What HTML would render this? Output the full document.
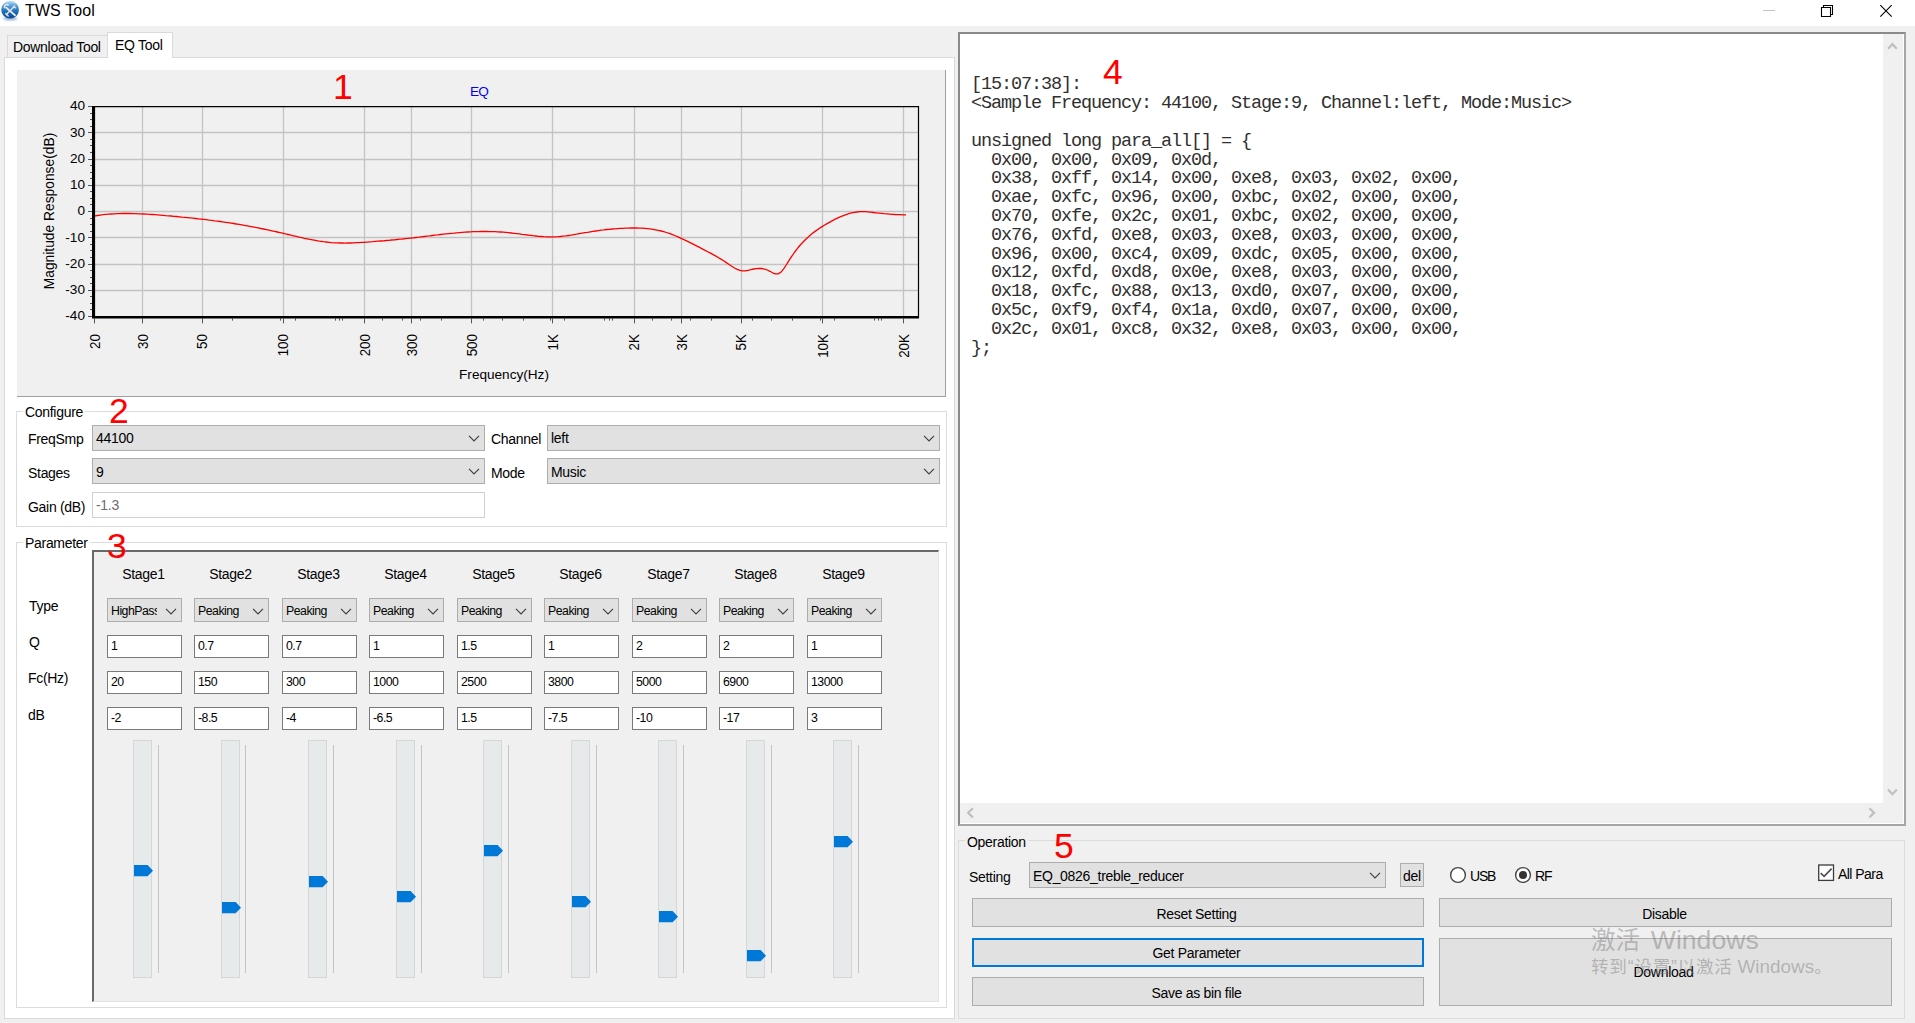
<!DOCTYPE html><html><head><meta charset="utf-8"><title>TWS Tool</title><style>
*{box-sizing:border-box}
html,body{margin:0;padding:0}
body{width:1915px;height:1023px;overflow:hidden;background:#f0f0f0;font-family:"Liberation Sans", "Noto Sans CJK SC", sans-serif;font-size:14px;letter-spacing:-0.3px;color:#000;position:relative}
.abs{position:absolute}
.lbl{position:absolute;white-space:nowrap;line-height:16px;height:16px}
.combo{position:absolute;background:#e1e1e1;border:1px solid #adadad;white-space:nowrap;overflow:hidden}
.combo span{position:absolute;left:3px;top:50%;transform:translateY(-50%);line-height:16px}
.combo svg{position:absolute;right:4px;top:50%;margin-top:-3px}
.edit{position:absolute;background:#fff;border:1px solid #7a7a7a;white-space:nowrap;overflow:hidden}
.edit span{position:absolute;left:3px;top:50%;transform:translateY(-50%);line-height:16px}
.btn{position:absolute;background:#e1e1e1;border:1px solid #adadad;text-align:center;white-space:nowrap}
.btn span{position:absolute;left:0;right:0;top:50%;transform:translateY(-50%);line-height:16px}
.grp{position:absolute;border:1px solid #dcdcdc}
.grp>.cap{position:absolute;top:-8px;left:6px;padding:0 2px;line-height:16px;white-space:nowrap}
.red{position:absolute;letter-spacing:0;color:#fe0000;font-size:35.5px;line-height:36px;white-space:nowrap;font-weight:400}
</style></head><body>
<div class="abs" style="left:0;top:0;width:1915px;height:26px;background:#fff"></div>
<svg class="abs" style="left:0;top:0" width="22" height="22" viewBox="0 0 22 22">
<defs><linearGradient id="g1" x1="0" y1="0" x2="0" y2="1"><stop offset="0" stop-color="#c2e3f9"/><stop offset="0.3" stop-color="#4d9bdb"/><stop offset="0.65" stop-color="#1767b3"/><stop offset="1" stop-color="#0c4a94"/></linearGradient>
<filter id="bl" x="-20%" y="-50%" width="140%" height="200%"><feGaussianBlur stdDeviation="0.8"/></filter></defs>
<ellipse cx="10.2" cy="18.6" rx="7.2" ry="1.6" fill="#2d64a8" opacity="0.55" filter="url(#bl)"/>
<circle cx="10.1" cy="9.7" r="8.9" fill="url(#g1)"/>
<path d="M6.2 7.6 L15 15.2" stroke="#e9e9e9" stroke-width="1.9" stroke-linecap="round" fill="none"/>
<path d="M14.6 6 L6.4 14.6" stroke="#e3e3e3" stroke-width="1.5" stroke-linecap="round" fill="none"/>
<path d="M4.8 8.2 A2.3 2.3 0 1 1 8.6 5.6" stroke="#e6e6e6" stroke-width="1.5" fill="none"/>
<path d="M5.6 13.6 L8.2 16 M13.4 6.6 L15.6 7.8" stroke="#dedede" stroke-width="1.4" stroke-linecap="round" fill="none"/>
</svg>
<div class="lbl" style="left:25px;top:1px;font-size:16px;letter-spacing:0.12px;line-height:20px;height:20px">TWS Tool</div>
<svg class="abs" style="left:1750px;top:0" width="165" height="26" viewBox="0 0 165 26">
<path d="M13 10.5 H25" stroke="#c4c4c4" stroke-width="1" fill="none"/>
<path d="M71.5 7.5 H80.5 V16.5 H71.5 Z M73.5 7 V5.5 H82.5 V14.5 H81" stroke="#000" stroke-width="1.1" fill="none"/>
<path d="M130.3 5.2 L141.7 16.6 M141.7 5.2 L130.3 16.6" stroke="#000" stroke-width="1.1" fill="none"/>
</svg>
<div class="abs" style="left:4px;top:57px;width:951px;height:962px;background:#fff;border:1px solid #dadada"></div>
<div class="abs" style="left:7px;top:35px;width:101px;height:22px;background:#f0f0f0;border:1px solid #dadada;border-bottom:none"></div>
<div class="lbl" style="left:13px;top:39px">Download Tool</div>
<div class="abs" style="left:107px;top:32px;width:66px;height:26px;background:#fff;border:1px solid #dadada;border-bottom:none"></div>
<div class="lbl" style="left:115px;top:37px">EQ Tool</div>
<div class="abs" style="left:17px;top:70px;width:929px;height:327px;background:#f0f0f0;border-right:1px solid #a0a0a0;border-bottom:1px solid #a0a0a0"></div>
<svg class="abs" style="left:0;top:60px" width="960" height="340" viewBox="0 60 960 340" font-family='"Liberation Sans", sans-serif' font-size="13.6" letter-spacing="0">
<path d="M142.5 106V316 M202.5 106V316 M283.5 106V316 M364.5 106V316 M411.5 106V316 M471.5 106V316 M552.5 106V316 M634.5 106V316 M681.5 106V316 M741.5 106V316 M822.5 106V316 M903.5 106V316 M94 132.5H918 M94 159.5H918 M94 185.5H918 M94 211.5H918 M94 237.5H918 M94 264.5H918 M94 290.5H918" stroke="#c3c3c3" stroke-width="1.3" fill="none"/>
<polyline points="94.9,215.9 97.6,215.5 100.3,215.1 103.1,214.7 105.8,214.4 108.5,214.2 111.2,214.0 114.0,213.8 116.7,213.7 119.4,213.6 122.1,213.5 124.8,213.5 127.6,213.5 130.3,213.5 133.0,213.6 135.7,213.7 138.4,213.8 141.2,213.9 143.9,214.0 146.6,214.2 149.3,214.4 152.1,214.5 154.8,214.7 157.5,214.9 160.2,215.1 162.9,215.3 165.7,215.6 168.4,215.8 171.1,216.0 173.8,216.3 176.6,216.5 179.3,216.8 182.0,217.1 184.7,217.3 187.4,217.6 190.2,217.9 192.9,218.2 195.6,218.5 198.3,218.8 201.0,219.1 203.8,219.4 206.5,219.7 209.2,220.1 211.9,220.4 214.7,220.8 217.4,221.1 220.1,221.5 222.8,221.9 225.5,222.3 228.3,222.7 231.0,223.1 233.7,223.5 236.4,224.0 239.2,224.4 241.9,224.9 244.6,225.4 247.3,225.8 250.0,226.3 252.8,226.8 255.5,227.4 258.2,227.9 260.9,228.5 263.6,229.0 266.4,229.6 269.1,230.2 271.8,230.8 274.5,231.4 277.3,232.0 280.0,232.6 282.7,233.2 285.4,233.9 288.1,234.5 290.9,235.2 293.6,235.8 296.3,236.4 299.0,237.1 301.8,237.7 304.5,238.3 307.2,238.8 309.9,239.4 312.6,239.9 315.4,240.4 318.1,240.9 320.8,241.3 323.5,241.7 326.2,242.0 329.0,242.3 331.7,242.6 334.4,242.8 337.1,242.9 339.9,243.0 342.6,243.0 345.3,243.1 348.0,243.0 350.7,243.0 353.5,242.9 356.2,242.7 358.9,242.6 361.6,242.4 364.4,242.3 367.1,242.1 369.8,241.9 372.5,241.7 375.2,241.4 378.0,241.2 380.7,241.0 383.4,240.8 386.1,240.5 388.8,240.3 391.6,240.0 394.3,239.8 397.0,239.5 399.7,239.2 402.5,239.0 405.2,238.7 407.9,238.4 410.6,238.1 413.3,237.8 416.1,237.5 418.8,237.2 421.5,236.8 424.2,236.5 427.0,236.2 429.7,235.9 432.4,235.5 435.1,235.2 437.8,234.9 440.6,234.5 443.3,234.2 446.0,233.9 448.7,233.6 451.4,233.3 454.2,233.1 456.9,232.8 459.6,232.6 462.3,232.4 465.1,232.2 467.8,232.0 470.5,231.9 473.2,231.7 475.9,231.6 478.7,231.6 481.4,231.5 484.1,231.5 486.8,231.5 489.6,231.6 492.3,231.6 495.0,231.7 497.7,231.9 500.4,232.0 503.2,232.2 505.9,232.4 508.6,232.7 511.3,233.0 514.0,233.3 516.8,233.6 519.5,233.9 522.2,234.3 524.9,234.6 527.7,235.0 530.4,235.3 533.1,235.7 535.8,236.0 538.5,236.3 541.3,236.5 544.0,236.7 546.7,236.8 549.4,236.9 552.2,236.9 554.9,236.8 557.6,236.7 560.3,236.5 563.0,236.2 565.8,235.9 568.5,235.5 571.2,235.1 573.9,234.6 576.6,234.2 579.4,233.7 582.1,233.2 584.8,232.7 587.5,232.3 590.3,231.8 593.0,231.4 595.7,231.0 598.4,230.6 601.1,230.2 603.9,229.9 606.6,229.5 609.3,229.3 612.0,229.0 614.8,228.8 617.5,228.6 620.2,228.4 622.9,228.3 625.6,228.1 628.4,228.1 631.1,228.0 633.8,228.0 636.5,228.0 639.2,228.1 642.0,228.2 644.7,228.4 647.4,228.6 650.1,228.9 652.9,229.3 655.6,229.8 658.3,230.3 661.0,231.0 663.7,231.7 666.5,232.5 669.2,233.4 671.9,234.4 674.6,235.5 677.4,236.6 680.1,237.8 682.8,239.1 685.5,240.4 688.2,241.7 691.0,243.1 693.7,244.4 696.4,245.8 699.1,247.2 701.8,248.6 704.6,250.1 707.3,251.5 710.0,252.9 712.7,254.4 715.5,255.9 718.2,257.5 720.9,259.1 723.6,260.8 726.3,262.6 729.1,264.5 731.8,266.3 734.5,268.0 737.2,269.4 740.0,270.4 742.7,270.9 745.4,270.8 748.1,270.3 750.8,269.7 753.6,269.0 756.3,268.6 759.0,268.4 761.7,268.5 764.5,269.1 767.2,270.0 769.9,271.3 772.6,272.8 775.3,273.9 778.1,273.9 780.8,272.3 783.5,269.1 786.2,265.0 788.9,260.6 791.7,256.4 794.4,252.5 797.1,248.8 799.8,245.5 802.6,242.5 805.3,239.7 808.0,237.2 810.7,234.8 813.4,232.6 816.2,230.6 818.9,228.7 821.6,226.9 824.3,225.2 827.1,223.6 829.8,222.1 832.5,220.6 835.2,219.2 837.9,217.9 840.7,216.7 843.4,215.6 846.1,214.6 848.8,213.7 851.5,212.9 854.3,212.4 857.0,212.0 859.7,211.7 862.4,211.7 865.2,211.7 867.9,211.9 870.6,212.2 873.3,212.5 876.0,212.8 878.8,213.1 881.5,213.4 884.2,213.7 886.9,213.9 889.7,214.1 892.4,214.3 895.1,214.5 897.8,214.6 900.5,214.7 903.3,214.8 906.0,214.8" stroke="#ff0000" stroke-width="1.3" fill="none" stroke-linejoin="round"/>
<path d="M92 106.6H919M918.5 106V318" stroke="#000" stroke-width="1.2" fill="none"/>
<rect x="92" y="106" width="3.1" height="212" fill="#000"/>
<rect x="92" y="316" width="827" height="2.5" fill="#000"/>
<path d="M88 316.5H92 M88 290.5H92 M88 264.5H92 M88 237.5H92 M88 211.5H92 M88 185.5H92 M88 159.5H92 M88 132.5H92 M88 106.5H92 M90 113.5H92 M90 119.5H92 M90 126.5H92 M90 139.5H92 M90 145.5H92 M90 152.5H92 M90 165.5H92 M90 172.5H92 M90 178.5H92 M90 191.5H92 M90 198.5H92 M90 204.5H92 M90 218.5H92 M90 224.5H92 M90 231.5H92 M90 244.5H92 M90 250.5H92 M90 257.5H92 M90 270.5H92 M90 277.5H92 M90 283.5H92 M90 296.5H92 M90 303.5H92 M90 309.5H92 M94.5 318V323.4 M142.5 318V323.4 M202.5 318V323.4 M283.5 318V323.4 M364.5 318V323.4 M411.5 318V323.4 M471.5 318V323.4 M552.5 318V323.4 M634.5 318V323.4 M681.5 318V323.4 M741.5 318V323.4 M822.5 318V323.4 M903.5 318V323.4 M232.5 318V320.6 M280.5 318V320.6 M295.5 318V320.6 M335.5 318V320.6 M339.5 318V320.6 M342.5 318V320.6 M382.5 318V320.6 M402.5 318V320.6 M420.5 318V320.6 M441.5 318V320.6 M483.5 318V320.6 M502.5 318V320.6 M523.5 318V320.6 M550.5 318V320.6 M564.5 318V320.6 M604.5 318V320.6 M609.5 318V320.6 M612.5 318V320.6 M652.5 318V320.6 M671.5 318V320.6 M690.5 318V320.6 M711.5 318V320.6 M752.5 318V320.6 M771.5 318V320.6 M792.5 318V320.6 M820.5 318V320.6 M834.5 318V320.6 M874.5 318V320.6 M878.5 318V320.6 M881.5 318V320.6" stroke="#555" stroke-width="1" fill="none"/>
<text x="85" y="320.4" text-anchor="end">-40</text>
<text x="85" y="294.1" text-anchor="end">-30</text>
<text x="85" y="267.9" text-anchor="end">-20</text>
<text x="85" y="241.7" text-anchor="end">-10</text>
<text x="85" y="215.4" text-anchor="end">0</text>
<text x="85" y="189.2" text-anchor="end">10</text>
<text x="85" y="162.9" text-anchor="end">20</text>
<text x="85" y="136.7" text-anchor="end">30</text>
<text x="85" y="110.4" text-anchor="end">40</text>
<text transform="translate(100.0 334) rotate(-90) scale(1 1.12)" text-anchor="end" font-size="13.4">20</text>
<text transform="translate(147.5 334) rotate(-90) scale(1 1.12)" text-anchor="end" font-size="13.4">30</text>
<text transform="translate(207.3 334) rotate(-90) scale(1 1.12)" text-anchor="end" font-size="13.4">50</text>
<text transform="translate(288.4 334) rotate(-90) scale(1 1.12)" text-anchor="end" font-size="13.4">100</text>
<text transform="translate(369.6 334) rotate(-90) scale(1 1.12)" text-anchor="end" font-size="13.4">200</text>
<text transform="translate(417.0 334) rotate(-90) scale(1 1.12)" text-anchor="end" font-size="13.4">300</text>
<text transform="translate(476.8 334) rotate(-90) scale(1 1.12)" text-anchor="end" font-size="13.4">500</text>
<text transform="translate(558.0 334) rotate(-90) scale(1 1.12)" text-anchor="end" font-size="13.4">1K</text>
<text transform="translate(639.1 334) rotate(-90) scale(1 1.12)" text-anchor="end" font-size="13.4">2K</text>
<text transform="translate(686.6 334) rotate(-90) scale(1 1.12)" text-anchor="end" font-size="13.4">3K</text>
<text transform="translate(746.4 334) rotate(-90) scale(1 1.12)" text-anchor="end" font-size="13.4">5K</text>
<text transform="translate(827.5 334) rotate(-90) scale(1 1.12)" text-anchor="end" font-size="13.4">10K</text>
<text transform="translate(908.7 334) rotate(-90) scale(1 1.12)" text-anchor="end" font-size="13.4">20K</text>
<text transform="translate(54 211) rotate(-90)" text-anchor="middle" font-size="13.8">Magnitude Response(dB)</text>
<text x="504" y="379" text-anchor="middle">Frequency(Hz)</text>
<text x="479" y="95.5" text-anchor="middle" fill="#0000ff" letter-spacing="-0.9">EQ</text>
</svg>
<div class="red" style="left:333px;top:69px">1</div>
<div class="grp" style="left:16px;top:411px;width:931px;height:116px"><div class="cap" style="background:#fff">Configure</div></div>
<div class="red" style="left:109px;top:393px">2</div>
<div class="lbl" style="left:28px;top:431px">FreqSmp</div>
<div class="combo" style="left:92px;top:425px;width:393px;height:26px;"><span>44100</span><svg width="12" height="7" viewBox="0 0 12 7"><path d="M1 0.8 L6 5.8 L11 0.8" stroke="#404040" stroke-width="1.2" fill="none"/></svg></div>
<div class="lbl" style="left:491px;top:431px">Channel</div>
<div class="combo" style="left:547px;top:425px;width:393px;height:26px;"><span>left</span><svg width="12" height="7" viewBox="0 0 12 7"><path d="M1 0.8 L6 5.8 L11 0.8" stroke="#404040" stroke-width="1.2" fill="none"/></svg></div>
<div class="lbl" style="left:28px;top:465px">Stages</div>
<div class="combo" style="left:92px;top:458px;width:393px;height:26px;"><span style="margin-top:1px">9</span><svg width="12" height="7" viewBox="0 0 12 7"><path d="M1 0.8 L6 5.8 L11 0.8" stroke="#404040" stroke-width="1.2" fill="none"/></svg></div>
<div class="lbl" style="left:491px;top:465px">Mode</div>
<div class="combo" style="left:547px;top:458px;width:393px;height:26px;"><span style="margin-top:1px">Music</span><svg width="12" height="7" viewBox="0 0 12 7"><path d="M1 0.8 L6 5.8 L11 0.8" stroke="#404040" stroke-width="1.2" fill="none"/></svg></div>
<div class="lbl" style="left:28px;top:499px">Gain (dB)</div>
<div class="edit" style="left:92px;top:492px;width:393px;height:26px;color:#6d6d6d;border-color:#d0d0d0;"><span>-1.3</span></div>
<div class="grp" style="left:16px;top:542px;width:931px;height:466px"><div class="cap" style="background:#fff">Parameter</div></div>
<div class="abs" style="left:92px;top:550px;width:847px;height:452px;background:#f0f0f0;border-top:2px solid #696969;border-left:2px solid #696969;border-right:1px solid #e3e3e3;border-bottom:1px solid #e3e3e3"></div>
<div class="red" style="left:107px;top:528px">3</div>
<div class="lbl" style="left:29px;top:598px">Type</div>
<div class="lbl" style="left:29px;top:634px">Q</div>
<div class="lbl" style="left:28px;top:670px">Fc(Hz)</div>
<div class="lbl" style="left:28px;top:707px">dB</div>
<div class="lbl" style="left:106px;top:566px;width:75px;text-align:center">Stage1</div>
<div class="combo" style="left:107px;top:598px;width:75px;height:24px;font-size:12.3px;letter-spacing:-0.5px"><span style="width:46px;overflow:hidden;margin-top:1px">HighPass</span><svg style="margin-top:-2px" width="12" height="7" viewBox="0 0 12 7"><path d="M1 0.8 L6 5.8 L11 0.8" stroke="#404040" stroke-width="1.2" fill="none"/></svg></div>
<div class="edit" style="left:107px;top:635px;width:75px;height:23px;border-color:#7a7a7a;font-size:12.3px;letter-spacing:-0.5px;"><span style="margin-top:-1px">1</span></div>
<div class="edit" style="left:107px;top:671px;width:75px;height:23px;border-color:#7a7a7a;font-size:12.3px;letter-spacing:-0.5px;"><span style="margin-top:-1px">20</span></div>
<div class="edit" style="left:107px;top:707px;width:75px;height:23px;border-color:#7a7a7a;font-size:12.3px;letter-spacing:-0.5px;"><span style="margin-top:-1px">-2</span></div>
<div class="abs" style="left:133px;top:740px;width:19px;height:238px;background:#e7eaea;border:1px solid #d6d6d6"></div>
<div class="abs" style="left:158px;top:745px;width:1px;height:228px;background:#c4c4c4"></div>
<svg class="abs" style="left:134px;top:864.9px" width="20" height="12" viewBox="0 0 20 12"><path d="M0 0 H13.6 L19 5.65 L13.6 11.3 H0 Z" fill="#0078d7"/></svg>
<div class="lbl" style="left:193px;top:566px;width:75px;text-align:center">Stage2</div>
<div class="combo" style="left:194px;top:598px;width:75px;height:24px;font-size:12.3px;letter-spacing:-0.5px"><span style="width:46px;overflow:hidden;margin-top:1px">Peaking</span><svg style="margin-top:-2px" width="12" height="7" viewBox="0 0 12 7"><path d="M1 0.8 L6 5.8 L11 0.8" stroke="#404040" stroke-width="1.2" fill="none"/></svg></div>
<div class="edit" style="left:194px;top:635px;width:75px;height:23px;border-color:#7a7a7a;font-size:12.3px;letter-spacing:-0.5px;"><span style="margin-top:-1px">0.7</span></div>
<div class="edit" style="left:194px;top:671px;width:75px;height:23px;border-color:#7a7a7a;font-size:12.3px;letter-spacing:-0.5px;"><span style="margin-top:-1px">150</span></div>
<div class="edit" style="left:194px;top:707px;width:75px;height:23px;border-color:#7a7a7a;font-size:12.3px;letter-spacing:-0.5px;"><span style="margin-top:-1px">-8.5</span></div>
<div class="abs" style="left:221px;top:740px;width:19px;height:238px;background:#e7eaea;border:1px solid #d6d6d6"></div>
<div class="abs" style="left:245px;top:745px;width:1px;height:228px;background:#c4c4c4"></div>
<svg class="abs" style="left:222px;top:902.2px" width="20" height="12" viewBox="0 0 20 12"><path d="M0 0 H13.6 L19 5.65 L13.6 11.3 H0 Z" fill="#0078d7"/></svg>
<div class="lbl" style="left:281px;top:566px;width:75px;text-align:center">Stage3</div>
<div class="combo" style="left:282px;top:598px;width:75px;height:24px;font-size:12.3px;letter-spacing:-0.5px"><span style="width:46px;overflow:hidden;margin-top:1px">Peaking</span><svg style="margin-top:-2px" width="12" height="7" viewBox="0 0 12 7"><path d="M1 0.8 L6 5.8 L11 0.8" stroke="#404040" stroke-width="1.2" fill="none"/></svg></div>
<div class="edit" style="left:282px;top:635px;width:75px;height:23px;border-color:#7a7a7a;font-size:12.3px;letter-spacing:-0.5px;"><span style="margin-top:-1px">0.7</span></div>
<div class="edit" style="left:282px;top:671px;width:75px;height:23px;border-color:#7a7a7a;font-size:12.3px;letter-spacing:-0.5px;"><span style="margin-top:-1px">300</span></div>
<div class="edit" style="left:282px;top:707px;width:75px;height:23px;border-color:#7a7a7a;font-size:12.3px;letter-spacing:-0.5px;"><span style="margin-top:-1px">-4</span></div>
<div class="abs" style="left:308px;top:740px;width:19px;height:238px;background:#e7eaea;border:1px solid #d6d6d6"></div>
<div class="abs" style="left:333px;top:745px;width:1px;height:228px;background:#c4c4c4"></div>
<svg class="abs" style="left:309px;top:876.2px" width="20" height="12" viewBox="0 0 20 12"><path d="M0 0 H13.6 L19 5.65 L13.6 11.3 H0 Z" fill="#0078d7"/></svg>
<div class="lbl" style="left:368px;top:566px;width:75px;text-align:center">Stage4</div>
<div class="combo" style="left:369px;top:598px;width:75px;height:24px;font-size:12.3px;letter-spacing:-0.5px"><span style="width:46px;overflow:hidden;margin-top:1px">Peaking</span><svg style="margin-top:-2px" width="12" height="7" viewBox="0 0 12 7"><path d="M1 0.8 L6 5.8 L11 0.8" stroke="#404040" stroke-width="1.2" fill="none"/></svg></div>
<div class="edit" style="left:369px;top:635px;width:75px;height:23px;border-color:#7a7a7a;font-size:12.3px;letter-spacing:-0.5px;"><span style="margin-top:-1px">1</span></div>
<div class="edit" style="left:369px;top:671px;width:75px;height:23px;border-color:#7a7a7a;font-size:12.3px;letter-spacing:-0.5px;"><span style="margin-top:-1px">1000</span></div>
<div class="edit" style="left:369px;top:707px;width:75px;height:23px;border-color:#7a7a7a;font-size:12.3px;letter-spacing:-0.5px;"><span style="margin-top:-1px">-6.5</span></div>
<div class="abs" style="left:396px;top:740px;width:19px;height:238px;background:#e7eaea;border:1px solid #d6d6d6"></div>
<div class="abs" style="left:421px;top:745px;width:1px;height:228px;background:#c4c4c4"></div>
<svg class="abs" style="left:397px;top:891.3px" width="20" height="12" viewBox="0 0 20 12"><path d="M0 0 H13.6 L19 5.65 L13.6 11.3 H0 Z" fill="#0078d7"/></svg>
<div class="lbl" style="left:456px;top:566px;width:75px;text-align:center">Stage5</div>
<div class="combo" style="left:457px;top:598px;width:75px;height:24px;font-size:12.3px;letter-spacing:-0.5px"><span style="width:46px;overflow:hidden;margin-top:1px">Peaking</span><svg style="margin-top:-2px" width="12" height="7" viewBox="0 0 12 7"><path d="M1 0.8 L6 5.8 L11 0.8" stroke="#404040" stroke-width="1.2" fill="none"/></svg></div>
<div class="edit" style="left:457px;top:635px;width:75px;height:23px;border-color:#7a7a7a;font-size:12.3px;letter-spacing:-0.5px;"><span style="margin-top:-1px">1.5</span></div>
<div class="edit" style="left:457px;top:671px;width:75px;height:23px;border-color:#7a7a7a;font-size:12.3px;letter-spacing:-0.5px;"><span style="margin-top:-1px">2500</span></div>
<div class="edit" style="left:457px;top:707px;width:75px;height:23px;border-color:#7a7a7a;font-size:12.3px;letter-spacing:-0.5px;"><span style="margin-top:-1px">1.5</span></div>
<div class="abs" style="left:483px;top:740px;width:19px;height:238px;background:#e7eaea;border:1px solid #d6d6d6"></div>
<div class="abs" style="left:508px;top:745px;width:1px;height:228px;background:#c4c4c4"></div>
<svg class="abs" style="left:484px;top:844.8px" width="20" height="12" viewBox="0 0 20 12"><path d="M0 0 H13.6 L19 5.65 L13.6 11.3 H0 Z" fill="#0078d7"/></svg>
<div class="lbl" style="left:543px;top:566px;width:75px;text-align:center">Stage6</div>
<div class="combo" style="left:544px;top:598px;width:75px;height:24px;font-size:12.3px;letter-spacing:-0.5px"><span style="width:46px;overflow:hidden;margin-top:1px">Peaking</span><svg style="margin-top:-2px" width="12" height="7" viewBox="0 0 12 7"><path d="M1 0.8 L6 5.8 L11 0.8" stroke="#404040" stroke-width="1.2" fill="none"/></svg></div>
<div class="edit" style="left:544px;top:635px;width:75px;height:23px;border-color:#7a7a7a;font-size:12.3px;letter-spacing:-0.5px;"><span style="margin-top:-1px">1</span></div>
<div class="edit" style="left:544px;top:671px;width:75px;height:23px;border-color:#7a7a7a;font-size:12.3px;letter-spacing:-0.5px;"><span style="margin-top:-1px">3800</span></div>
<div class="edit" style="left:544px;top:707px;width:75px;height:23px;border-color:#7a7a7a;font-size:12.3px;letter-spacing:-0.5px;"><span style="margin-top:-1px">-7.5</span></div>
<div class="abs" style="left:571px;top:740px;width:19px;height:238px;background:#e7eaea;border:1px solid #d6d6d6"></div>
<div class="abs" style="left:596px;top:745px;width:1px;height:228px;background:#c4c4c4"></div>
<svg class="abs" style="left:572px;top:896.0px" width="20" height="12" viewBox="0 0 20 12"><path d="M0 0 H13.6 L19 5.65 L13.6 11.3 H0 Z" fill="#0078d7"/></svg>
<div class="lbl" style="left:631px;top:566px;width:75px;text-align:center">Stage7</div>
<div class="combo" style="left:632px;top:598px;width:75px;height:24px;font-size:12.3px;letter-spacing:-0.5px"><span style="width:46px;overflow:hidden;margin-top:1px">Peaking</span><svg style="margin-top:-2px" width="12" height="7" viewBox="0 0 12 7"><path d="M1 0.8 L6 5.8 L11 0.8" stroke="#404040" stroke-width="1.2" fill="none"/></svg></div>
<div class="edit" style="left:632px;top:635px;width:75px;height:23px;border-color:#7a7a7a;font-size:12.3px;letter-spacing:-0.5px;"><span style="margin-top:-1px">2</span></div>
<div class="edit" style="left:632px;top:671px;width:75px;height:23px;border-color:#7a7a7a;font-size:12.3px;letter-spacing:-0.5px;"><span style="margin-top:-1px">5000</span></div>
<div class="edit" style="left:632px;top:707px;width:75px;height:23px;border-color:#7a7a7a;font-size:12.3px;letter-spacing:-0.5px;"><span style="margin-top:-1px">-10</span></div>
<div class="abs" style="left:658px;top:740px;width:19px;height:238px;background:#e7eaea;border:1px solid #d6d6d6"></div>
<div class="abs" style="left:683px;top:745px;width:1px;height:228px;background:#c4c4c4"></div>
<svg class="abs" style="left:659px;top:911.1px" width="20" height="12" viewBox="0 0 20 12"><path d="M0 0 H13.6 L19 5.65 L13.6 11.3 H0 Z" fill="#0078d7"/></svg>
<div class="lbl" style="left:718px;top:566px;width:75px;text-align:center">Stage8</div>
<div class="combo" style="left:719px;top:598px;width:75px;height:24px;font-size:12.3px;letter-spacing:-0.5px"><span style="width:46px;overflow:hidden;margin-top:1px">Peaking</span><svg style="margin-top:-2px" width="12" height="7" viewBox="0 0 12 7"><path d="M1 0.8 L6 5.8 L11 0.8" stroke="#404040" stroke-width="1.2" fill="none"/></svg></div>
<div class="edit" style="left:719px;top:635px;width:75px;height:23px;border-color:#7a7a7a;font-size:12.3px;letter-spacing:-0.5px;"><span style="margin-top:-1px">2</span></div>
<div class="edit" style="left:719px;top:671px;width:75px;height:23px;border-color:#7a7a7a;font-size:12.3px;letter-spacing:-0.5px;"><span style="margin-top:-1px">6900</span></div>
<div class="edit" style="left:719px;top:707px;width:75px;height:23px;border-color:#7a7a7a;font-size:12.3px;letter-spacing:-0.5px;"><span style="margin-top:-1px">-17</span></div>
<div class="abs" style="left:746px;top:740px;width:19px;height:238px;background:#e7eaea;border:1px solid #d6d6d6"></div>
<div class="abs" style="left:771px;top:745px;width:1px;height:228px;background:#c4c4c4"></div>
<svg class="abs" style="left:747px;top:949.9px" width="20" height="12" viewBox="0 0 20 12"><path d="M0 0 H13.6 L19 5.65 L13.6 11.3 H0 Z" fill="#0078d7"/></svg>
<div class="lbl" style="left:806px;top:566px;width:75px;text-align:center">Stage9</div>
<div class="combo" style="left:807px;top:598px;width:75px;height:24px;font-size:12.3px;letter-spacing:-0.5px"><span style="width:46px;overflow:hidden;margin-top:1px">Peaking</span><svg style="margin-top:-2px" width="12" height="7" viewBox="0 0 12 7"><path d="M1 0.8 L6 5.8 L11 0.8" stroke="#404040" stroke-width="1.2" fill="none"/></svg></div>
<div class="edit" style="left:807px;top:635px;width:75px;height:23px;border-color:#7a7a7a;font-size:12.3px;letter-spacing:-0.5px;"><span style="margin-top:-1px">1</span></div>
<div class="edit" style="left:807px;top:671px;width:75px;height:23px;border-color:#7a7a7a;font-size:12.3px;letter-spacing:-0.5px;"><span style="margin-top:-1px">13000</span></div>
<div class="edit" style="left:807px;top:707px;width:75px;height:23px;border-color:#7a7a7a;font-size:12.3px;letter-spacing:-0.5px;"><span style="margin-top:-1px">3</span></div>
<div class="abs" style="left:833px;top:740px;width:19px;height:238px;background:#e7eaea;border:1px solid #d6d6d6"></div>
<div class="abs" style="left:858px;top:745px;width:1px;height:228px;background:#c4c4c4"></div>
<svg class="abs" style="left:834px;top:836.2px" width="20" height="12" viewBox="0 0 20 12"><path d="M0 0 H13.6 L19 5.65 L13.6 11.3 H0 Z" fill="#0078d7"/></svg>
<div class="abs" style="left:958px;top:32px;width:948px;height:794px;background:#fff;border:2px solid #8a8a8a;border-right-color:#a6a6a6;border-bottom-color:#a6a6a6"></div>
<div class="abs" style="left:1883px;top:34px;width:20px;height:789px;background:#f0f0f0"></div>
<div class="abs" style="left:960px;top:803px;width:943px;height:20px;background:#f0f0f0"></div>
<svg class="abs" style="left:1883px;top:34px" width="20" height="770" viewBox="0 0 20 770">
<path d="M5 14.8 L9.4 10.2 L13.8 14.8" stroke="#bfbfbf" stroke-width="2.2" fill="none"/>
<path d="M5 755.6 L9.4 760.2 L13.8 755.6" stroke="#bfbfbf" stroke-width="2.2" fill="none"/>
</svg>
<svg class="abs" style="left:959px;top:803px" width="944" height="20" viewBox="0 0 944 20">
<path d="M13.8 5.2 L9.2 9.8 L13.8 14.4" stroke="#bfbfbf" stroke-width="2.2" fill="none"/>
<path d="M910.4 5.2 L915 9.8 L910.4 14.4" stroke="#bfbfbf" stroke-width="2.2" fill="none"/>
</svg>
<pre class="abs" style="left:971px;top:76.4px;margin:0;font-family:'Liberation Mono', 'Noto Sans CJK SC', monospace;font-size:18.5px;letter-spacing:-1.102px;line-height:18.8px;color:#303030">
[15:07:38]:
&lt;Sample Frequency: 44100, Stage:9, Channel:left, Mode:Music&gt;

unsigned long para_all[] = {
  0x00, 0x00, 0x09, 0x0d,
  0x38, 0xff, 0x14, 0x00, 0xe8, 0x03, 0x02, 0x00,
  0xae, 0xfc, 0x96, 0x00, 0xbc, 0x02, 0x00, 0x00,
  0x70, 0xfe, 0x2c, 0x01, 0xbc, 0x02, 0x00, 0x00,
  0x76, 0xfd, 0xe8, 0x03, 0xe8, 0x03, 0x00, 0x00,
  0x96, 0x00, 0xc4, 0x09, 0xdc, 0x05, 0x00, 0x00,
  0x12, 0xfd, 0xd8, 0x0e, 0xe8, 0x03, 0x00, 0x00,
  0x18, 0xfc, 0x88, 0x13, 0xd0, 0x07, 0x00, 0x00,
  0x5c, 0xf9, 0xf4, 0x1a, 0xd0, 0x07, 0x00, 0x00,
  0x2c, 0x01, 0xc8, 0x32, 0xe8, 0x03, 0x00, 0x00,
};</pre>
<div class="red" style="left:1103px;top:54px">4</div>
<div class="grp" style="left:958px;top:840px;width:947px;height:179px"><div class="cap" style="background:#f0f0f0;top:-7px">Operation</div></div>
<div class="red" style="left:1054px;top:828px">5</div>
<div class="lbl" style="left:969px;top:869px">Setting</div>
<div class="combo" style="left:1029px;top:862px;width:357px;height:26px;"><span style="margin-top:1px">EQ_0826_treble_reducer</span><svg width="12" height="7" viewBox="0 0 12 7"><path d="M1 0.8 L6 5.8 L11 0.8" stroke="#404040" stroke-width="1.2" fill="none"/></svg></div>
<div class="btn" style="left:1400px;top:863px;width:24px;height:24px"><span style="margin-top:1px">del</span></div>
<svg class="abs" style="left:1449px;top:866px" width="90" height="18" viewBox="0 0 90 18">
<circle cx="9" cy="9" r="7.4" fill="#fff" stroke="#444" stroke-width="1.4"/>
<circle cx="74" cy="9" r="7.4" fill="#fff" stroke="#444" stroke-width="1.4"/>
<circle cx="74" cy="9" r="4" fill="#333"/>
</svg>
<div class="lbl" style="left:1470px;top:868px;letter-spacing:-1.2px">USB</div>
<div class="lbl" style="left:1535px;top:868px;letter-spacing:-1.2px">RF</div>
<svg class="abs" style="left:1817px;top:864px" width="18" height="18" viewBox="0 0 18 18">
<rect x="1.7" y="1" width="14.8" height="15.4" fill="#fff" stroke="#3c3c3c" stroke-width="1.3"/>
<path d="M3.7 9.2 L7.1 12.4 L14.6 4.7" stroke="#505050" stroke-width="1.7" fill="none"/>
</svg>
<div class="lbl" style="left:1838px;top:866px;letter-spacing:-0.55px">All Para</div>
<div class="btn" style="left:972px;top:898px;width:452px;height:29px"><span style="margin-top:1px;padding-right:3px">Reset Setting</span></div>
<div class="btn" style="left:972px;top:938px;width:452px;height:29px;border:2px solid #0078d7"><span style="padding-right:3px">Get Parameter</span></div>
<div class="btn" style="left:972px;top:977px;width:452px;height:29px"><span style="margin-top:1px;padding-right:3px">Save as bin file</span></div>
<div class="btn" style="left:1439px;top:898px;width:453px;height:29px"><span style="margin-top:1px;padding-right:2px">Disable</span></div>
<div class="btn" style="left:1439px;top:938px;width:453px;height:68px"><span style="padding-right:4px">Download</span></div>
<div class="abs" style="left:1591px;top:925px;font-size:24.5px;line-height:30px;letter-spacing:0;color:rgba(120,120,120,0.46);white-space:nowrap">激活 <span style="font-size:26.6px;margin-left:4px">Windows</span></div>
<div class="abs" style="left:1591px;top:955px;font-size:17.6px;line-height:24px;letter-spacing:0;color:rgba(120,120,120,0.46);white-space:nowrap"><span style="letter-spacing:0.75px">转到“设置”以激活</span> <span style="font-size:18.9px">Windows</span>。</div>
</body></html>
